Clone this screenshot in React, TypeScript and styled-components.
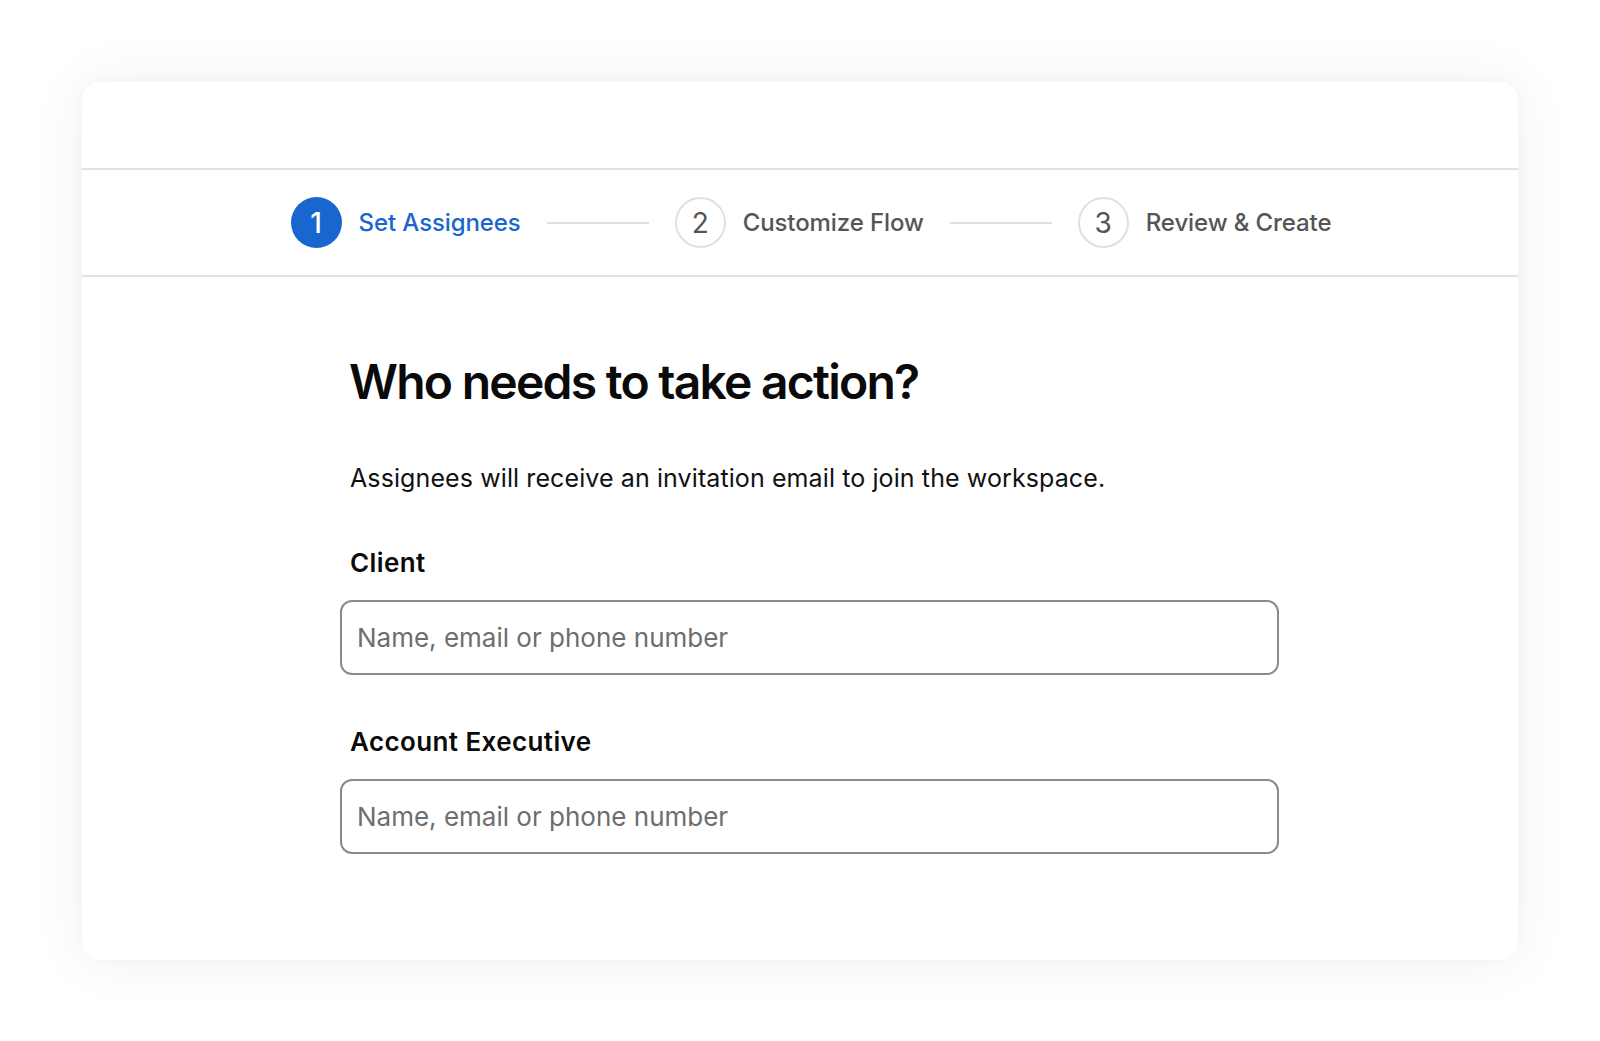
import React from "react";
import styled, { createGlobalStyle } from "styled-components";

const GlobalStyle = createGlobalStyle`
  html, body {
    margin: 0;
    padding: 0;
    background: #ffffff;
  }
  body {
    font-family: Inter, "Noto Sans", "Liberation Sans", sans-serif;
    -webkit-font-smoothing: antialiased;
  }
  * { box-sizing: border-box; }
`;

const Page = styled.div`
  width: 1600px;
  height: 1041px;
  padding: 82px;
  background: #ffffff;
`;

const Card = styled.div`
  width: 1436px;
  height: 878px;
  background: #ffffff;
  border-radius: 18px;
  box-shadow: 0 0 56px rgba(0, 0, 0, 0.065), 0 0 14px rgba(0, 0, 0, 0.02);
  display: flex;
  flex-direction: column;
  overflow: hidden;
`;

const TopBar = styled.div`
  height: 88px;
  border-bottom: 2px solid #e2e2e2;
`;

const Stepper = styled.nav`
  height: 107px;
  border-bottom: 2px solid #e2e2e2;
  display: flex;
  align-items: center;
  justify-content: center;
  padding-left: 22px;
`;

const Step = styled.div`
  display: flex;
  align-items: center;
  gap: 17px;
`;

const StepCircle = styled.div<{ $active?: boolean }>`
  width: 51px;
  height: 51px;
  border-radius: 50%;
  display: flex;
  align-items: center;
  justify-content: center;
  font-size: 28px;
  font-weight: ${(p) => (p.$active ? 500 : 400)};
  color: ${(p) => (p.$active ? "#ffffff" : "#555555")};
  background: ${(p) => (p.$active ? "#1a66d1" : "#ffffff")};
  border: ${(p) => (p.$active ? "none" : "2px solid #e0e0e0")};
`;

const StepLabel = styled.span<{ $active?: boolean }>`
  font-size: 24px;
  font-weight: 500;
  letter-spacing: -0.1px;
  color: ${(p) => (p.$active ? "#1a66d1" : "#555555")};
`;

const Connector = styled.div`
  width: 102px;
  height: 2px;
  background: #e0e0e0;
  margin: 0 26px 0 26px;
`;

const Body = styled.main`
  padding: 76px 0 0 258px;
  display: flex;
  flex-direction: column;
  width: 1200px;
`;

const Heading = styled.h1`
  margin: 0;
  padding-left: 9px;
  font-size: 48px;
  line-height: 58px;
  font-weight: 600;
  letter-spacing: -1.75px;
  color: #0a0a0a;
`;

const Subtitle = styled.p`
  margin: 51px 0 0;
  padding-left: 10px;
  font-size: 25px;
  line-height: 32px;
  font-weight: 400;
  letter-spacing: 0.1px;
  color: #111111;
`;

const Field = styled.div<{ $gap: number }>`
  margin-top: ${(p) => p.$gap}px;
  display: flex;
  flex-direction: column;
  gap: 21px;
`;

const Label = styled.label`
  padding-left: 10px;
  font-size: 26px;
  line-height: 32px;
  font-weight: 600;
  letter-spacing: 0.4px;
  color: #0a0a0a;
`;

const Input = styled.input`
  width: 939px;
  height: 75px;
  border: 2px solid #8a8a8a;
  border-radius: 12px;
  padding: 0 15px;
  font-family: Inter, "Noto Sans", "Liberation Sans", sans-serif;
  font-size: 26px;
  letter-spacing: 0;
  color: #222222;
  background: #ffffff;
  outline: none;

  &::placeholder {
    color: #6e6e6e;
  }
`;

const steps = [
  { n: 1, label: "Set Assignees", active: true },
  { n: 2, label: "Customize Flow", active: false },
  { n: 3, label: "Review & Create", active: false },
];

export default function App() {
  return (
    <>
      <GlobalStyle />
      <Page>
        <Card>
          <TopBar />
          <Stepper>
            {steps.map((s, i) => (
              <React.Fragment key={s.n}>
                {i > 0 && <Connector />}
                <Step>
                  <StepCircle $active={s.active}>{s.n}</StepCircle>
                  <StepLabel $active={s.active}>{s.label}</StepLabel>
                </Step>
              </React.Fragment>
            ))}
          </Stepper>
          <Body>
            <Heading>Who needs to take action?</Heading>
            <Subtitle>
              Assignees will receive an invitation email to join the workspace.
            </Subtitle>
            <Field $gap={53}>
              <Label htmlFor="client">Client</Label>
              <Input id="client" placeholder="Name, email or phone number" />
            </Field>
            <Field $gap={51}>
              <Label htmlFor="ae">Account Executive</Label>
              <Input id="ae" placeholder="Name, email or phone number" />
            </Field>
          </Body>
        </Card>
      </Page>
    </>
  );
}
